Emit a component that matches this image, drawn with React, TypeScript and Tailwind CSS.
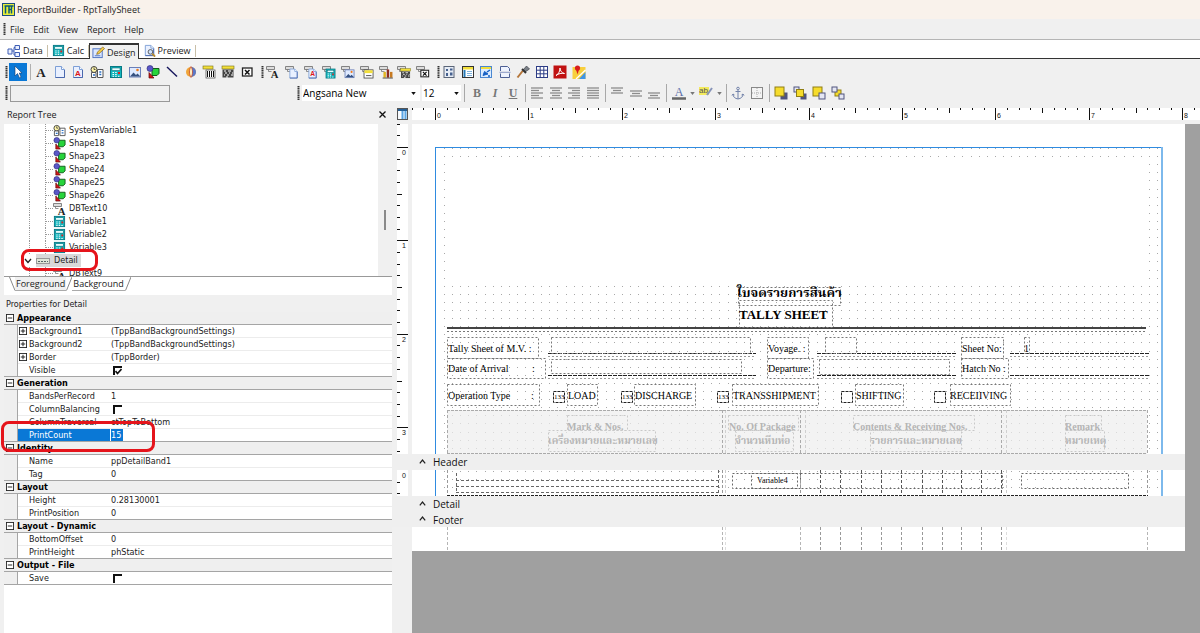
import { useState, type ReactNode } from "react";

const PX_PER_INCH = 93.4;
const DOT_PITCH = 8.1;

/* ---------- icons ---------- */

function Svg({ children, size = "size-3.5" }: { children: ReactNode; size?: string }) {
  return (
    <svg viewBox="0 0 14 14" className={`${size} shrink-0`} aria-hidden="true">
      {children}
    </svg>
  );
}

const Page = () => (
  <>
    <path d="M2.5 1.5h6l3 3v8h-9z" fill="#e9f0ff" stroke="#7d9fd6" />
    <path d="M8.5 1.5v3h3" fill="#fff" stroke="#7d9fd6" />
    <path d="M11.5 5v7.5h-9" fill="none" stroke="#4a68ad" />
  </>
);

const LetterA = () => (
  <text x="7" y="12" textAnchor="middle" fontFamily="Liberation Serif, serif" fontSize="13" fontWeight="700" fill="#222">
    A
  </text>
);

const Calculator = () => (
  <>
    <rect x="1.5" y="1.5" width="11" height="11" fill="#14b6bd" stroke="#087a85" />
    <rect x="3" y="3" width="8" height="2.5" fill="#e8ffff" stroke="#056" strokeWidth=".5" />
    <path d="M3.5 7.5h1.5M6.2 7.5h1.5M3.5 9.5h1.5M6.2 9.5h1.5M3.5 11.3h1.5M6.2 11.3h1.5M9 11.3h1.5" stroke="#fff" />
    <path d="M9 8h2" stroke="#e02020" strokeWidth="2" />
  </>
);

const Picture = () => (
  <>
    <rect x="1.5" y="2.5" width="11" height="9.5" fill="#dfeaff" stroke="#6a7fb8" />
    <circle cx="9.5" cy="5" r="1.3" fill="#ef7a1a" />
    <path d="M2 11.5l3.5-4 2.5 2.5 1.5-1.5 3 3z" fill="#35507f" />
  </>
);

const Shapes = () => (
  <>
    <path d="M6 3.5h7v5l-2 2H6z" fill="#27d43b" stroke="#145c1d" />
    <circle cx="4" cy="3.5" r="3" fill="#5a57c8" stroke="#26246f" strokeWidth=".6" />
    <path d="M3 7.5l5 5.5H3z" fill="#d01818" stroke="#5c0505" strokeWidth=".7" />
  </>
);

const SystemVariable = () => (
  <>
    <circle cx="4" cy="4.5" r="3" fill="#fff6a8" stroke="#444" />
    <path d="M4 2.5v2h1.5" stroke="#333" fill="none" strokeWidth=".8" />
    <path d="M1.5 7.5h4.5v5h-4.5zM7.5 4.5h5.5v8h-5.5z" fill="#fff" stroke="#555" />
    <path d="M3 10h2M9.3 7h2M9.3 9.5h2" stroke="#2a6fc4" strokeWidth="1.3" />
  </>
);

const BarcodeLines = () => (
  <>
    <rect x="1" y="1" width="10" height="3" fill="#f2df3a" stroke="#77701a" strokeWidth=".6" />
    <rect x="4" y="5" width="9" height="8" fill="#fff" stroke="#444" strokeWidth=".7" />
    <path d="M5.5 6v6M7.5 6v6M9.5 6v6M11.5 6v6" stroke="#111" />
  </>
);

const Barcode2D = () => (
  <>
    <rect x="1" y="1" width="12" height="3" fill="#f2df3a" stroke="#77701a" strokeWidth=".6" />
    <rect x="1.5" y="4.5" width="11" height="8" fill="#444" />
    <path d="M3 6h2M7 6h3M4 8h2M8 8h1M11 8h1M3 10h1M6 10h2M10 10h2M5 12h2" stroke="#fff" />
  </>
);

const CrossBox = () => (
  <>
    <rect x="2.5" y="3" width="9.5" height="8" fill="#fff" stroke="#222" strokeWidth="1.3" />
    <path d="M5 5l4.5 4.5M9.5 5L5 9.5" stroke="#111" strokeWidth="1.5" />
  </>
);

const Sphere = () => (
  <>
    <circle cx="7" cy="7" r="5" fill="#f0a53a" />
    <path d="M7 2a5 5 0 010 10z" fill="#5a78c9" />
    <path d="M7 1.5c2 3 2 8 0 11-2-3-2-8 0-11z" fill="#fff1c4" stroke="#c23b1a" strokeWidth=".7" />
  </>
);

const BarChart = () => (
  <>
    <path d="M2 5h3v7H2z" fill="#e0b421" />
    <path d="M6 2h3v10H6z" fill="#8c2b20" />
    <path d="M10 5h3v7h-3z" fill="#c77a21" />
    <path d="M1 12.5h12.5" stroke="#333" />
  </>
);

const Memo = () => (
  <>
    <rect x="1.5" y="2.5" width="11" height="10" fill="#fff" stroke="#444" />
    <rect x="2" y="3" width="10" height="3.5" fill="#f2df3a" />
    <path d="M4 9.5h6.5" stroke="#333" />
  </>
);

const RedAPage = () => (
  <>
    <Page />
    <text x="7" y="10.5" textAnchor="middle" fontFamily="Liberation Sans, sans-serif" fontSize="8" fontWeight="700" fill="#e01818">
      A
    </text>
  </>
);

// Data-aware variant: a small grey dataset in the corner behind the plain icon
function DataAware({ children }: { children: ReactNode }) {
  return (
    <Svg>
      <path d="M.5 1.5h8v3h-8z" fill="#ddd" stroke="#777" strokeWidth=".9" />
      <path d="M2.5 4.5v2h3" stroke="#777" fill="none" strokeWidth=".8" />
      <g transform="translate(2.8 2.8) scale(.82)">{children}</g>
    </Svg>
  );
}

function Grip({ tall }: { tall?: boolean }) {
  return (
    <svg viewBox="0 0 3 14" className={`w-[3px] shrink-0 ${tall ? "h-3.5" : "h-3"}`} preserveAspectRatio="none" aria-hidden="true">
      <path d="M1.5 0v14" stroke="#333" strokeWidth="2" strokeDasharray="1.5 .6" />
    </svg>
  );
}

const Separator = () => <span className="w-px h-[18px] bg-[#a8a8a8] shrink-0" />;

function ToolButton({ label, children }: { label: string; children: ReactNode }) {
  return (
    <button aria-label={label} className="flex items-center justify-center w-4 h-[18px] shrink-0">
      {children}
    </button>
  );
}

/* ---------- top part ---------- */

function TitleBar() {
  return (
    <header className="flex items-center gap-0.5 h-[19px] px-0.5 bg-[#f9f2eb] text-[9px] text-[#222]">
      <svg viewBox="0 0 13 13" className="size-[13px]" aria-hidden="true">
        <rect x=".5" y=".5" width="12" height="12" fill="#e8ee38" stroke="#1b4d82" />
        <path d="M3.5 2.500v8M7 2.500v8M2.500 3h9M7 6.500h3M9.500 3.500v2.500M9.500 7v3.500" stroke="#0b5a78" strokeWidth="1.500" fill="none" />
      </svg>
      <h1>ReportBuilder - RptTallySheet</h1>
    </header>
  );
}

function MenuBar() {
  return (
    <nav className="flex items-center h-[21px] pl-[3px] text-[9px] text-[#222] border-b border-[#b5b5b5]">
      <Grip />
      <div className="flex gap-[9px] pl-1">
        {["File", "Edit", "View", "Report", "Help"].map((item) => (
          <button key={item}>{item}</button>
        ))}
      </div>
    </nav>
  );
}

const viewTabs: { name: string; icon: ReactNode }[] = [
  {
    name: "Data",
    icon: (
      <Svg>
        <path d="M1 5h4v5H1zM8 1.5h4.5v4H8zM8 8.5h4.5v4H8zM5 7h2M7 3.5V11M7 3.5h1M7 11h1" fill="#eaf0ff" stroke="#3f5fb5" />
      </Svg>
    ),
  },
  { name: "Calc", icon: <Svg size="size-[13px]"><Calculator /></Svg> },
  {
    name: "Design",
    icon: (
      <Svg size="size-[13px]">
        <rect x="1" y="3" width="10" height="9.5" fill="#dbe7ff" stroke="#4a6fc0" />
        <path d="M3 10.5h6" stroke="#4a6fc0" />
        <path d="M5 9l1-2.5 5.5-5.5 2 1.8-6 5.5z" fill="#f5cf4a" stroke="#7d5a14" strokeWidth=".7" />
      </Svg>
    ),
  },
  {
    name: "Preview",
    icon: (
      <Svg size="size-[13px]">
        <Page />
        <circle cx="8" cy="8.5" r="2.5" fill="#cfe3ff" stroke="#555" />
        <path d="M10 10.5l3 3" stroke="#b58a2c" strokeWidth="2" />
      </Svg>
    ),
  },
];

function ViewTabs() {
  const [active, setActive] = useState("Design");
  return (
    <div className="flex items-end h-[19px] pl-[3px] bg-white border-b border-[#333] text-[9px] text-[#222]">
      {viewTabs.map((tab) => (
        <button
          key={tab.name}
          onClick={() => setActive(tab.name)}
          className={
            tab.name === active
              ? "flex items-center gap-0.5 h-4 px-0.5 -mb-px bg-[#f0f0f0] border-x border-t-2 border-[#333]"
              : "flex items-center gap-0.5 h-[15px] pl-1"
          }>
          {tab.icon}
          <span className={tab.name === active ? "" : "flex items-center h-3 pr-1 border-r border-[#c8bfa8]"}>{tab.name}</span>
        </button>
      ))}
    </div>
  );
}

const components: [string, ReactNode][] = [
  ["Label", <Svg><LetterA /></Svg>],
  ["Memo", <Svg><Page /></Svg>],
  ["RichText", <Svg><RedAPage /></Svg>],
  ["SystemVariable", <Svg><SystemVariable /></Svg>],
  ["Variable", <Svg><Calculator /></Svg>],
  ["Image", <Svg><Picture /></Svg>],
  ["Shape", <Svg><Shapes /></Svg>],
  ["Line", <Svg><path d="M2 2l10 9.5" stroke="#15155c" strokeWidth="1.4" /></Svg>],
  ["Chart", <Svg><Sphere /></Svg>],
  ["BarCode", <Svg><BarcodeLines /></Svg>],
  ["2DBarCode", <Svg><Barcode2D /></Svg>],
  ["CheckBox", <Svg><CrossBox /></Svg>],
];

const dataComponents: [string, ReactNode][] = [
  ["DBText", <DataAware><LetterA /></DataAware>],
  ["DBMemo", <DataAware><Page /></DataAware>],
  ["DBRichText", <DataAware><RedAPage /></DataAware>],
  ["DBCalc", <DataAware><Calculator /></DataAware>],
  ["DBImage", <DataAware><Picture /></DataAware>],
  ["DBBarCode", <DataAware><Memo /></DataAware>],
  ["DBChart", <DataAware><BarChart /></DataAware>],
  ["DB2DBarCode", <DataAware><Barcode2D /></DataAware>],
  ["DBCheckBox", <DataAware><CrossBox /></DataAware>],
];

const advancedComponents: [string, ReactNode][] = [
  ["Region", (
    <Svg>
      <rect x="2" y="1.5" width="10" height="11" fill="#e6ecf5" stroke="#5a6578" />
      <path d="M4 4h2v2H4zM4 8h2v3H4zM8 3.5h2.5v2H8zM8 7.5h2.5v3H8z" fill="#46618f" />
    </Svg>
  )],
  ["SubReport", (
    <Svg>
      <rect x="1.5" y="1.5" width="11" height="11" fill="#fff" stroke="#333" />
      <path d="M2 2h10v2.5H2z" fill="#f2df3a" />
      <path d="M3.5 5v7" stroke="#267ab8" strokeWidth="2" />
      <path d="M6 6.5h5M6 8.5h5M6 10.5h5" stroke="#7fb2dc" />
    </Svg>
  )],
  ["CrossTab", (
    <Svg>
      <rect x="1.5" y="1.5" width="11" height="11" fill="#dcecff" stroke="#4a87d1" />
      <path d="M2 2h10v2H2z" fill="#f2df3a" />
      <path d="M4 10.5l1.5-4L9 9l-2 .5z" fill="#1660c4" stroke="#1660c4" />
      <path d="M8 7l3-2M9 11h2" stroke="#1660c4" strokeWidth="1.5" />
    </Svg>
  )],
  ["PageBreak", (
    <Svg>
      <path d="M2.5 6V1.5h7l2 2V6M2.5 8.5v4h9v-4" fill="#eef3ff" stroke="#4d5f94" />
      <path d="M1.5 7.3h11" stroke="#8798c8" />
    </Svg>
  )],
  ["PaintBox", (
    <Svg>
      <path d="M7 5l3.5-4 3 3-4.5 3z" fill="#7a8088" stroke="#3c4148" strokeWidth=".7" />
      <path d="M7 5.5L1.5 12.5" stroke="#b5763a" strokeWidth="2" />
      <path d="M6 4l4 4" stroke="#333" strokeWidth="2" />
    </Svg>
  )],
  ["Table", (
    <Svg>
      <rect x="1.5" y="1.5" width="11" height="11" fill="#fff" stroke="#2c3c86" />
      <path d="M5.2 1.5v11M8.8 1.5v11M1.5 5.2h11M1.5 8.8h11" stroke="#2c3c86" />
    </Svg>
  )],
  ["PDF", (
    <Svg>
      <rect x=".5" y=".5" width="13" height="13" fill="#c01212" />
      <path d="M3 10.5c3-1.5 4-5 4-7.5 0 3 2 5 4.5 5.5-3-.5-6 0-8.5 2z" fill="none" stroke="#fff" />
    </Svg>
  )],
  ["Map", (
    <Svg>
      <rect x=".5" y="2" width="13" height="12" fill="#f8cf3c" />
      <path d="M7 14l6.5-7v7z" fill="#3f95e8" />
      <path d="M4 14l9.5-9" stroke="#fff" strokeWidth="1.3" />
      <circle cx="5.5" cy="3" r="2.6" fill="#d81e1e" />
      <path d="M4 4.5l1.5 5 1.5-5z" fill="#d81e1e" />
    </Svg>
  )],
];

function ToolGroup({ items, width }: { items: [string, ReactNode][]; width: string }) {
  return (
    <div className={`flex justify-between shrink-0 ${width}`}>
      {items.map(([label, icon]) => (
        <ToolButton key={label} label={label}>
          {icon}
        </ToolButton>
      ))}
    </div>
  );
}

function ComponentToolbar() {
  return (
    <div className="flex items-center h-6 pt-0.5 pl-[5px]">
      <Grip />
      <button aria-label="Select" className="flex items-center justify-center size-[18px] ml-px bg-[#0a78d6]">
        <svg viewBox="0 0 12 14" className="w-3 h-3.5" aria-hidden="true">
          <path d="M3 1v10l2.5-2.5L7.5 13l1.5-.8L7.3 8H10z" fill="#fff" stroke="#123a70" strokeWidth=".6" />
        </svg>
      </button>
      <span className="w-px h-4 ml-[3px] mr-0.5 bg-[#b0b0b0]" />
      <ToolGroup items={components} width="w-[222px]" />
      <span className="w-1.5" />
      <Grip />
      <span className="w-px" />
      <ToolGroup items={dataComponents} width="w-[166px]" />
      <span className="w-1.5" />
      <Grip />
      <span className="w-px" />
      <ToolGroup items={advancedComponents} width="w-[146px]" />
    </div>
  );
}

function Lines({ rows }: { rows: [number, number, number][] }) {
  return (
    <Svg>
      {rows.map(([x1, x2, y]) => (
        <path key={y} d={`M${x1} ${y}H${x2}`} stroke="#8c8c8c" strokeWidth="1.3" />
      ))}
    </Svg>
  );
}

const alignments: [string, ReactNode][] = [
  ["Align left", <Lines rows={[[1, 13, 2], [1, 9, 4.5], [1, 13, 7], [1, 9, 9.5], [1, 13, 12]]} />],
  ["Center", <Lines rows={[[1, 13, 2], [3, 11, 4.5], [1, 13, 7], [3, 11, 9.5], [1, 13, 12]]} />],
  ["Align right", <Lines rows={[[1, 13, 2], [5, 13, 4.5], [1, 13, 7], [5, 13, 9.5], [1, 13, 12]]} />],
  ["Justify", <Lines rows={[[1, 13, 2], [1, 13, 4.5], [1, 13, 7], [1, 13, 9.5], [1, 13, 12]]} />],
];

const verticalAlignments: [string, ReactNode][] = [
  ["Align top", <Lines rows={[[1, 13, 2], [3, 11, 4.5], [1, 13, 7]]} />],
  ["Align middle", <Lines rows={[[1, 13, 5], [3, 11, 7.5], [1, 13, 10]]} />],
  ["Align bottom", <Lines rows={[[1, 13, 7], [3, 11, 9.5], [1, 13, 12]]} />],
];

const yellow = { fill: "#f6dc2c", stroke: "#8f7e14" };
const violet = { fill: "#e4e6f3", stroke: "#50557e" };

const ordering: [string, ReactNode][] = [
  ["Bring to front", <Svg><rect x="7" y="7" width="6" height="6" {...violet} fill="#50557e" /><rect x="1" y="1" width="9" height="9" {...yellow} /></Svg>],
  ["Bring forward", <Svg><rect x="1" y="1" width="5" height="5" {...violet} /><rect x="8" y="8" width="5" height="5" {...violet} fill="#50557e" /><rect x="3.5" y="3.5" width="7" height="7" {...yellow} /></Svg>],
  ["Send to back", <Svg><rect x="1" y="1" width="9" height="9" {...yellow} /><rect x="7" y="7" width="6" height="6" {...violet} /></Svg>],
  ["Send backward", <Svg><rect x="4" y="4" width="6" height="6" {...yellow} /><rect x="1" y="1" width="5" height="5" {...violet} /><rect x="8" y="8" width="5" height="5" {...violet} /></Svg>],
];

function DropArrow({ dark }: { dark?: boolean }) {
  return (
    <svg viewBox="0 0 6 4" className="w-[5px] h-[3px] shrink-0" aria-hidden="true">
      <path d="M0 0h6L3 4z" fill={dark ? "#111" : "#777"} />
    </svg>
  );
}

function FormatToolbar() {
  return (
    <div className="flex items-center h-[22px] pb-0.5 pl-[5px]">
      <Grip tall />
      <input aria-label="Component value" className="w-40 h-[17px] ml-0.5 px-1 text-[10px] bg-[#f0f0f0] border border-[#999]" />
      <span className="w-[127px]" />
      <Grip tall />
      <div className="flex items-center h-4 w-[118px] ml-0.5 pl-px pr-1 bg-white text-[10px]">
        <select aria-label="Font name" className="appearance-none grow h-4 leading-4 outline-none">
          <option>Angsana New</option>
        </select>
        <DropArrow dark />
      </div>
      <div className="flex items-center h-4 w-[39px] ml-0.5 pl-px pr-0.5 bg-white text-[10px]">
        <select aria-label="Font size" className="appearance-none grow h-4 leading-4 outline-none">
          <option>12</option>
        </select>
        <DropArrow dark />
      </div>
      <span className="w-[3px]" />
      <Separator />
      <div className="flex gap-0.5 px-1 font-['Liberation_Serif',serif] text-[12px] font-bold text-[#777]">
        <ToolButton label="Bold">B</ToolButton>
        <ToolButton label="Italic"><i>I</i></ToolButton>
        <ToolButton label="Underline"><u>U</u></ToolButton>
      </div>
      <Separator />
      <span className="w-[3px]" />
      <ToolGroup items={alignments} width="w-[72px]" />
      <span className="w-1" />
      <Separator />
      <span className="w-[3px]" />
      <ToolGroup items={verticalAlignments} width="w-[53px]" />
      <span className="w-1" />
      <Separator />
      <div className="flex items-center gap-[3px] px-1">
        <ToolButton label="Font color">
          <Svg>
            <text x="7" y="9.5" textAnchor="middle" fontFamily="Liberation Serif, serif" fontSize="12" fill="#5a6fa8">A</text>
            <path d="M0 12.5h14" stroke="#666" strokeWidth="2.5" />
          </Svg>
        </ToolButton>
        <DropArrow />
        <ToolButton label="Highlight color">
          <Svg>
            <path d="M0 1h10v8H0z" fill="#f3ea5c" />
            <text x="0" y="7" fontFamily="Liberation Sans, sans-serif" fontSize="8" fill="#555">ab</text>
            <path d="M13 2l-5 7" stroke="#8794b8" strokeWidth="2" />
          </Svg>
        </ToolButton>
        <DropArrow />
      </div>
      <Separator />
      <div className="flex gap-[3px] px-[3px]">
        <ToolButton label="Anchors">
          <Svg>
            <circle cx="7" cy="2.5" r="1.3" fill="none" stroke="#7383aa" />
            <path d="M7 4v9M4.5 5.5h5M2 8c0 3 2 4.5 5 5 3-.5 5-2 5-5M1 9.5L2 8l1.5 1M13 9.5L12 8l-1.5 1" fill="none" stroke="#7383aa" />
          </Svg>
        </ToolButton>
        <ToolButton label="Border">
          <Svg>
            <rect x="1.5" y="1.5" width="11" height="11" fill="#f4f4f4" stroke="#888" />
            <path d="M7 2v10M2 7h10" stroke="#aaa" strokeDasharray="1 1" />
          </Svg>
        </ToolButton>
      </div>
      <span className="w-px" />
      <Separator />
      <span className="w-[3px]" />
      <ToolGroup items={ordering} width="w-[73px]" />
    </div>
  );
}

/* ---------- report tree ---------- */

const treeItems: { name: string; icon: ReactNode }[] = [
  { name: "SystemVariable1", icon: <Svg size="size-[13px]"><SystemVariable /></Svg> },
  ...["Shape18", "Shape23", "Shape24", "Shape25", "Shape26"].map((name) => ({
    name,
    icon: <Svg size="size-[13px]"><Shapes /></Svg>,
  })),
  { name: "DBText10", icon: <DataAware><LetterA /></DataAware> },
  ...["Variable1", "Variable2", "Variable3"].map((name) => ({
    name,
    icon: <Svg size="size-[13px]"><Calculator /></Svg>,
  })),
];

function TreeLeaf({ name, icon }: { name: string; icon: ReactNode }) {
  return (
    <li className="flex items-center h-[13px] pl-[25px]">
      <span className="w-4 h-full border-l border-dotted border-[#999]" />
      <span className="flex items-center w-2 h-full border-l border-dotted border-[#999]">
        <span className="w-full border-t border-dotted border-[#999]" />
      </span>
      <span className="flex w-4">{icon}</span>
      {name}
    </li>
  );
}

function Slant({ back }: { back?: boolean }) {
  return (
    <svg viewBox="0 0 6 14" className="w-1.5 h-3.5" aria-hidden="true">
      <path d={back ? "M.5 0L6 13.5" : "M6 0L.5 13.5"} stroke="#888" fill="none" />
    </svg>
  );
}

function ReportTree() {
  return (
    <section>
      <div className="flex items-center justify-between h-[19px] pl-[3px] pr-1.5 text-[9px] text-[#222]">
        <h2>Report Tree</h2>
        <button aria-label="Close report tree">
          <svg viewBox="0 0 7 7" className="size-[7px]">
            <path d="M.5.5l6 6M6.5.5l-6 6" stroke="#111" strokeWidth="1.3" />
          </svg>
        </button>
      </div>
      <div className="flex h-[153px] overflow-hidden bg-white border-b border-[#999]">
        <ul className="grow font-['DejaVu_Sans_Condensed','Noto_Sans',sans-serif] text-[9px] text-[#222]">
          {treeItems.map((item) => (
            <TreeLeaf key={item.name} {...item} />
          ))}
          <li className="relative flex items-center h-[13px] pl-5">
            <svg viewBox="0 0 8 6" className="w-2 h-1.5 mr-1" aria-hidden="true">
              <path d="M1 1l3 3.5L7 1" fill="none" stroke="#222" strokeWidth="1.3" />
            </svg>
            <span className="flex items-center h-full gap-1 pr-[3px] bg-[#d9d9d9]">
              <svg viewBox="0 0 14 6" className="w-3.5 h-1.5" aria-hidden="true">
                <rect x=".5" y=".5" width="13" height="5" fill="#dfe6d8" stroke="#999" />
                <path d="M2 3.5h10" stroke="#566" strokeDasharray="2 1" />
              </svg>
              Detail
            </span>
            <span className="absolute left-[17px] -top-[5px] w-[77px] h-[22px] rounded-lg border-[3px] border-[#e5141b]" />
          </li>
          <TreeLeaf name="DBText9" icon={<DataAware><LetterA /></DataAware>} />
        </ul>
        <div className="flex justify-center w-3.5 pt-[86px] bg-[#f0f0f0]">
          <span className="w-0.5 h-5 bg-[#8a8a8a]" />
        </div>
      </div>
      <div className="flex h-[18px] pl-[5px] bg-white text-[9px] text-[#222]">
        <Slant back />
        <button className="h-3.5 px-px bg-[#f0f0f0] border-b border-[#aaa]">Foreground</button>
        <Slant />
        <button className="h-3.5 px-px border-b border-[#aaa]">Background</button>
        <Slant />
      </div>
    </section>
  );
}

/* ---------- properties ---------- */

type Prop = { name: string; value?: string; checked?: boolean; expandable?: boolean; selected?: boolean };

const sections: { title: string; props: Prop[] }[] = [
  {
    title: "Appearance",
    props: [
      { name: "Background1", value: "(TppBandBackgroundSettings)", expandable: true },
      { name: "Background2", value: "(TppBandBackgroundSettings)", expandable: true },
      { name: "Border", value: "(TppBorder)", expandable: true },
      { name: "Visible", checked: true },
    ],
  },
  {
    title: "Generation",
    props: [
      { name: "BandsPerRecord", value: "1" },
      { name: "ColumnBalancing", checked: false },
      { name: "ColumnTraversal", value: "ctTopToBottom" },
      { name: "PrintCount", value: "15", selected: true },
    ],
  },
  { title: "Identity", props: [{ name: "Name", value: "ppDetailBand1" }, { name: "Tag", value: "0" }] },
  { title: "Layout", props: [{ name: "Height", value: "0.28130001" }, { name: "PrintPosition", value: "0" }] },
  { title: "Layout - Dynamic", props: [{ name: "BottomOffset", value: "0" }, { name: "PrintHeight", value: "phStatic" }] },
  { title: "Output - File", props: [{ name: "Save", checked: false }] },
];

function Expander({ open }: { open?: boolean }) {
  return (
    <svg viewBox="0 0 9 9" className="size-2 shrink-0" aria-hidden="true">
      <rect x=".5" y=".5" width="8" height="8" fill="#fff" stroke="#222" />
      <path d={open ? "M2 4.5h5" : "M2 4.5h5M4.5 2v5"} stroke="#111" />
    </svg>
  );
}

function PropertyValue({ prop }: { prop: Prop }) {
  const [checked, setChecked] = useState(prop.checked);
  if (prop.checked !== undefined) {
    return (
      <span className="relative flex pl-0.5">
        <input
          id={prop.name}
          type="checkbox"
          checked={checked}
          onChange={() => setChecked(!checked)}
          className="appearance-none size-[9px] border-t-2 border-l-2 border-[#111] bg-white"
        />
        {checked && (
          <svg viewBox="0 0 7 7" className="absolute left-1 top-0.5 size-[7px] pointer-events-none">
            <path d="M.5 3l2 2.5L6.5 1" fill="none" stroke="#111" strokeWidth="1.6" />
          </svg>
        )}
      </span>
    );
  }
  if (prop.selected) {
    return (
      <input
        id={prop.name}
        defaultValue={prop.value}
        className="block w-3 h-3 bg-[#0a78d6] text-white outline-none"
      />
    );
  }
  return <>{prop.value}</>;
}

function Properties() {
  return (
    <section className="relative grow bg-white">
      <h2 className="h-[17px] pl-0.5 bg-[#f0f0f0] leading-[18px] text-[9px] text-[#222] font-['DejaVu_Sans_Condensed','Noto_Sans',sans-serif]">
        Properties for Detail
      </h2>
      <table className="w-full table-fixed border-separate border-spacing-0 text-[9px] leading-3 text-[#222] font-['DejaVu_Sans_Condensed','Noto_Sans',sans-serif]">
        <colgroup>
          <col className="w-3.5" />
          <col className="w-[92px]" />
          <col />
        </colgroup>
        {sections.map((section) => (
          <tbody key={section.title}>
            <tr>
              <th colSpan={3} className="h-[13px] p-0 bg-[#efefef] border-b border-[#a5a5a5] text-left text-black">
                <span className="flex items-center gap-[3px] pl-0.5">
                  <Expander open />
                  {section.title}
                </span>
              </th>
            </tr>
            {section.props.map((prop, i) => {
              const last = i === section.props.length - 1;
              const line = last ? "border-b border-b-[#a5a5a5]" : "border-b border-b-[#ececec]";
              return (
                <tr key={prop.name}>
                  <td className={`h-[13px] p-0 bg-[#efefef] border-r border-r-[#a5a5a5] ${last ? "border-b border-b-[#a5a5a5]" : ""}`} />
                  <td className={`h-[13px] p-0 ${line} ${prop.selected ? "bg-[#0a78d6] text-white" : ""}`}>
                    <label htmlFor={prop.name} className={`flex items-center gap-0.5 ${prop.expandable ? "pl-px" : "pl-[11px]"}`}>
                      {prop.expandable && <Expander />}
                      {prop.name}
                    </label>
                  </td>
                  <td className={`h-[13px] p-0 pl-px ${line}`}>
                    <PropertyValue prop={prop} />
                  </td>
                </tr>
              );
            })}
          </tbody>
        ))}
      </table>
      <span className="absolute -left-[3px] top-[126px] w-[154px] h-[31px] rounded-lg border-[3px] border-[#e5141b] pointer-events-none" />
    </section>
  );
}

/* ---------- designer ---------- */

function HorizontalRuler() {
  const ticks = Array.from({ length: 140 }, (_, i) => i - 2);
  return (
    <div className="grow min-w-0 h-3 overflow-hidden bg-white">
      <svg className="w-[1640px] h-3" aria-hidden="true">
        {ticks.map((t) => {
          const x = Math.round(23 + (t * PX_PER_INCH) / 8);
          const h = t % 8 === 0 ? 12 : t % 4 === 0 ? 5 : 2;
          return <rect key={t} x={x} y="0" width="1" height={h} fill="#111" />;
        })}
        {ticks.filter((t) => t % 8 === 0 && t >= 0).map((t) => (
          <text key={t} x={Math.round(25 + (t * PX_PER_INCH) / 8)} y="10" fontSize="7" fontFamily="Liberation Sans, sans-serif" fill="#111">
            {t / 8}
          </text>
        ))}
      </svg>
    </div>
  );
}

function VerticalRuler({ zero, count }: { zero: number; count: number }) {
  const ticks = Array.from({ length: count }, (_, i) => (zero > 0 ? i - 2 : i));
  return (
    <div className="w-5 pl-[5px] shrink-0 bg-[#f0f0f0]">
      <svg className="block w-[11px] h-full bg-white" aria-hidden="true">
        {ticks.map((t) => {
          const y = Math.round(zero + (t * PX_PER_INCH) / 8);
          const w = t % 8 === 0 ? 11 : t % 4 === 0 ? 5 : 3;
          return t === 0 && zero === 0 ? null : <rect key={t} x="0" y={y} width={w} height="1" fill="#111" />;
        })}
        {ticks.filter((t) => t % 8 === 0 && t >= 0).map((t) => (
          <text key={t} x="5" y={Math.round(zero + 8 + (t * PX_PER_INCH) / 8)} fontSize="7" fontFamily="Liberation Sans, sans-serif" fill="#111">
            {t / 8}
          </text>
        ))}
      </svg>
    </div>
  );
}

// Snap grid as one path of single-pixel dots
function dotGrid(top: number, rows: number) {
  let d = "";
  for (let r = 0; r < rows; r++) {
    for (let c = 0; c < 89; c++) {
      d += `M${Math.round(32 + c * DOT_PITCH)} ${Math.round(top + r * DOT_PITCH) + 0.5}h1`;
    }
  }
  return d;
}

type Box = [number, number, number, number];

function Outlines({ boxes, color }: { boxes: Box[]; color: string }) {
  return (
    <g fill="none" stroke={color} strokeDasharray="2 2">
      {boxes.map(([x, y, w, h]) => (
        <rect key={`${x}-${y}`} x={x + 0.5} y={y + 0.5} width={w} height={h} />
      ))}
    </g>
  );
}

function Rules({ xs, y1, y2, color }: { xs: number[]; y1: number; y2: number; color: string }) {
  return (
    <g stroke={color} strokeDasharray="3 2">
      {xs.map((x) => (
        <path key={x} d={`M${x + 0.5} ${y1}V${y2}`} />
      ))}
    </g>
  );
}

function Band({ zero = 0, ticks = 0, height, children }: { zero?: number; ticks?: number; height: string; children: ReactNode }) {
  return (
    <div className={`flex ${height}`}>
      {ticks > 0 ? <VerticalRuler zero={zero} count={ticks} /> : <span className="w-5 shrink-0 bg-[#f0f0f0]" />}
      <div className="relative w-[773px] shrink-0 overflow-hidden bg-white">{children}</div>
    </div>
  );
}

function BandBar({ name, height }: { name: string; height: string }) {
  return (
    <button className={`flex items-center gap-[7px] w-[793px] pl-[27px] bg-[#efefef] text-left text-[10px] text-[#111] ${height}`}>
      <svg viewBox="0 0 7 7" className="size-[7px]" aria-hidden="true">
        <path d="M.8 4.3L3.5 1l2.7 3.3" fill="none" stroke="#222" strokeWidth="1.2" />
      </svg>
      {name}
    </button>
  );
}

const headerBoxes: Box[] = [
  [326, 163, 102, 18], [327, 176, 93, 27],
  [35, 213, 91, 21], [35, 234, 98, 20], [35, 260, 92, 21],
  [139, 213, 199, 16], [139, 235, 190, 14],
  [355, 213, 41, 21], [413, 213, 31, 16], [355, 234, 46, 20], [407, 235, 130, 15],
  [549, 213, 42, 21], [612, 213, 5, 16], [549, 234, 47, 20],
  [155, 260, 30, 21], [222, 260, 61, 21], [320, 260, 86, 21], [443, 260, 48, 21], [538, 260, 60, 21],
];

const titleBoxes: Box[] = [
  [155, 291, 60, 15], [136, 306, 107, 21], [316, 291, 70, 15], [323, 306, 58, 21],
  [441, 291, 121, 15], [458, 306, 91, 21], [653, 291, 36, 15], [653, 306, 39, 21],
];

const checkBoxes: Box[] = [
  [141, 267, 11, 11], [209, 267, 11, 11], [305, 267, 11, 11], [429, 267, 11, 11], [522, 267, 11, 11],
];

const underlines = [[136, 344], [405, 545], [598, 738]];
const cellRules = [408, 428, 449, 469, 489, 510, 530, 549, 569, 589];

const labels: { text: string; at: string }[] = [
  { text: "Tally Sheet of M.V. :", at: "left-[36px] top-[219px]" },
  { text: "Date of Arrival", at: "left-[36px] top-[239px]" },
  { text: ":", at: "left-[120px] top-[239px]" },
  { text: "Operation Type", at: "left-[36px] top-[266px]" },
  { text: ":", at: "left-[119px] top-[266px]" },
  { text: "Voyage. :", at: "left-[356px] top-[219px]" },
  { text: "Departure:", at: "left-[356px] top-[239px]" },
  { text: "Sheet No:", at: "left-[550px] top-[219px]" },
  { text: "1", at: "left-[612px] top-[219px]" },
  { text: "Hatch No :", at: "left-[550px] top-[239px]" },
  { text: "LOAD", at: "left-[156px] top-[266px]" },
  { text: "DISCHARGE", at: "left-[223px] top-[266px]" },
  { text: "TRANSSHIPMENT", at: "left-[321px] top-[266px]" },
  { text: "SHIFTING", at: "left-[444px] top-[266px]" },
  { text: "RECEIIVING", at: "left-[538px] top-[266px]" },
];

// English and Thai captions are separate labels on the band
const columnTitles: { text: string; at: string }[] = [
  { text: "Mark & Nos.", at: "left-[155px] top-[296px]" },
  { text: "เครื่องหมายและหมายเลข", at: "left-[136px] top-[310px]" },
  { text: "No. Of Package", at: "left-[317px] top-[296px]" },
  { text: "จำนวนหีบห่อ", at: "left-[323px] top-[310px]" },
  { text: "Contents & Receiving Nos.", at: "left-[441px] top-[296px]" },
  { text: "รายการและหมายเลข", at: "left-[458px] top-[310px]" },
  { text: "Remark", at: "left-[653px] top-[296px]" },
  { text: "หมายเหตุ", at: "left-[653px] top-[310px]" },
];

function HeaderBand() {
  return (
    <Band zero={23} ticks={32} height="h-[330px]">
      <svg className="block w-full h-full" aria-hidden="true">
        <path d={dotGrid(24, 38)} stroke="#a8a8a8" />
        <rect x="35" y="34" width="699" height="127" fill="#fff" />
        <rect x="35" y="286" width="700" height="44" fill="#eee" fillOpacity=".7" />
        <rect x="23" y="23" width="727" height="1" fill="#2f8be0" />
        <rect x="23" y="23" width="1" height="307" fill="#2f8be0" />
        <path d="M750 23v307" stroke="#7db9ec" strokeWidth="2" />
        <path d="M35 204H734" stroke="#444" strokeWidth="2" />
        <path d="M35 207.5H734" stroke="#777" strokeDasharray="2 2" />
        {underlines.map(([a, b]) => (
          <g key={a}>
            <path d={`M${a} 229.5H${b}M${a} 251.5H${b}`} stroke="#222" strokeDasharray="4 1" />
            <path d={`M${a} 232.5H${b}M${a} 254.5H${b}`} stroke="#999" strokeDasharray="2 2" />
          </g>
        ))}
        <Outlines boxes={headerBoxes} color="#777" />
        <Outlines boxes={titleBoxes} color="#c8c8c8" />
        <g fill="#fff" stroke="#222" strokeDasharray="3 1">
          {checkBoxes.map(([x, y, w, h]) => (
            <rect key={x} x={x + 0.5} y={y + 0.5} width={w} height={h} />
          ))}
        </g>
        <Rules xs={[35, 310, 388, 589, 735]} y1={286} y2={330} color="#aaa" />
        <Rules xs={[313, 393, 594]} y1={286} y2={330} color="#d0d0d0" />
        <path d="M35 286.5H735M35 329.5H735" stroke="#aaa" strokeDasharray="3 1" />
      </svg>
      <div className="absolute left-[325px] top-[159px] whitespace-nowrap font-bold text-black">
        <p className="text-[13px] leading-5">ใบจดรายการสินค้า</p>
        <p className="pl-0.5 text-[13px] leading-6">TALLY SHEET</p>
      </div>
      {labels.map((label) => (
        <span key={label.at} className={`absolute whitespace-nowrap text-[10px] leading-3 text-black ${label.at}`}>
          {label.text}
        </span>
      ))}
      <span className="absolute left-[142px] top-[268px] text-[7px] leading-[10px]">133</span>
      <span className="absolute left-[210px] top-[268px] text-[7px] leading-[10px]">133</span>
      <span className="absolute left-[306px] top-[268px] text-[7px] leading-[10px]">133</span>
      {columnTitles.map((title) => (
        <span key={title.at} className={`absolute whitespace-nowrap font-bold text-[10px] leading-3.5 text-[#b5b5b5] ${title.at}`}>
          {title.text}
        </span>
      ))}
    </Band>
  );
}

function DetailBand() {
  return (
    <Band ticks={3} height="h-[26px]">
      <svg className="block w-full h-full" aria-hidden="true">
        <path d={dotGrid(1, 3)} stroke="#a8a8a8" />
        <rect x="23" y="0" width="1" height="26" fill="#2f8be0" />
        <path d="M750 0V26" stroke="#7db9ec" strokeWidth="2" />
        <rect x="44" y="10" width="262" height="13" fill="#fff" />
        <path d="M44 10.5H306M44 16.5H306M44 22.5H306M44.5 3V23M306.5 0V23" stroke="#666" strokeDasharray="3 2" />
        <Outlines boxes={[[320, 3, 65, 15], [339, 3, 49, 15], [388, 3, 202, 15], [609, 3, 107, 15]]} color="#666" />
        <Rules xs={cellRules} y1={0} y2={26} color="#555" />
        <Rules xs={[35, 310, 388, 735]} y1={0} y2={26} color="#999" />
        <Rules xs={[313, 594]} y1={0} y2={26} color="#ccc" />
        <path d="M35 25.5H736" stroke="#222" strokeDasharray="3 1" />
      </svg>
      <span className="absolute left-[345px] top-1.5 text-[8px] leading-[10px] text-black">Variable4</span>
    </Band>
  );
}

function FooterBand() {
  return (
    <Band height="h-6">
      <svg className="block w-full h-full" aria-hidden="true">
        <Rules xs={cellRules} y1={0} y2={24} color="#999" />
        <Rules xs={[35, 310, 388, 735]} y1={0} y2={24} color="#b5b5b5" />
        <Rules xs={[313, 594]} y1={0} y2={24} color="#ddd" />
      </svg>
    </Band>
  );
}

function Designer() {
  return (
    <main className="flex flex-col grow min-w-0">
      <div className="flex h-[19px] pt-[3px]">
        <div className="w-5 pl-[5px] shrink-0">
          <svg viewBox="0 0 11 12" className="w-[11px] h-3" aria-hidden="true">
            <rect x=".5" y=".5" width="10" height="11" fill="#f4f8fc" stroke="#555" />
            <path d="M1 1h9v2H1z" fill="#245f96" />
            <path d="M3 3v8" stroke="#fff" />
            <path d="M5.5 3v8M8.5 3v8" stroke="#5aa5e4" strokeWidth="2" />
          </svg>
        </div>
        <HorizontalRuler />
      </div>
      <div className="flex grow overflow-hidden">
        <div className="flex flex-col w-full bg-[linear-gradient(to_right,#f0f0f0_20px,#a0a0a0_20px)] font-['Liberation_Serif','Noto_Serif_Thai',serif]">
          <HeaderBand />
          <div className="font-['Open_Sans',sans-serif]">
            <BandBar name="Header" height="h-4" />
          </div>
          <DetailBand />
          <div className="font-['Open_Sans',sans-serif]">
            <BandBar name="Detail" height="h-4" />
            <BandBar name="Footer" height="h-[15px]" />
          </div>
          <FooterBand />
        </div>
      </div>
    </main>
  );
}

export default function App() {
  return (
    <div className="flex flex-col min-h-screen bg-[#f0f0f0] font-['Open_Sans','Noto_Sans',sans-serif] leading-none">
      <TitleBar />
      <MenuBar />
      <ViewTabs />
      <ComponentToolbar />
      <FormatToolbar />
      <div className="flex grow">
        <aside className="flex flex-col w-98 pl-1 shrink-0">
          <ReportTree />
          <Properties />
        </aside>
        <Designer />
      </div>
    </div>
  );
}
